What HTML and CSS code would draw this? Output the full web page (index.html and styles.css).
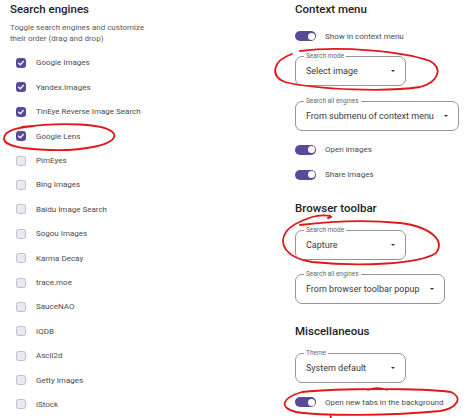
FILE: index.html
```html
<!DOCTYPE html>
<html lang="en">
<head>
<meta charset="utf-8">
<title>Options</title>
<link rel="stylesheet" href="styles.css">
</head>
<body>
<div class="page">
  <section class="col col-left">
    <h2 class="title">Search engines</h2>
    <p class="desc">Toggle search engines and customize<br>their order (drag and drop)</p>
    <ul class="engines">
      <li class="engine"><span class="cb on"><svg viewBox="0 0 10 10"><polyline points="2.6,5.2 4.3,6.8 7.4,3.4"/></svg></span>Google Images</li>
      <li class="engine"><span class="cb on"><svg viewBox="0 0 10 10"><polyline points="2.6,5.2 4.3,6.8 7.4,3.4"/></svg></span>Yandex.Images</li>
      <li class="engine"><span class="cb on"><svg viewBox="0 0 10 10"><polyline points="2.6,5.2 4.3,6.8 7.4,3.4"/></svg></span>TinEye Reverse Image Search</li>
      <li class="engine"><span class="cb on"><svg viewBox="0 0 10 10"><polyline points="2.6,5.2 4.3,6.8 7.4,3.4"/></svg></span>Google Lens</li>
      <li class="engine"><span class="cb"></span>PimEyes</li>
      <li class="engine"><span class="cb"></span>Bing Images</li>
      <li class="engine"><span class="cb"></span>Baidu Image Search</li>
      <li class="engine"><span class="cb"></span>Sogou Images</li>
      <li class="engine"><span class="cb"></span>Karma Decay</li>
      <li class="engine"><span class="cb"></span>trace.moe</li>
      <li class="engine"><span class="cb"></span>SauceNAO</li>
      <li class="engine"><span class="cb"></span>IQDB</li>
      <li class="engine"><span class="cb"></span>Ascii2d</li>
      <li class="engine"><span class="cb"></span>Getty Images</li>
      <li class="engine"><span class="cb"></span>iStock</li>
    </ul>
  </section>

  <section class="col col-right">
    <h2 class="title">Context menu</h2>
    <div class="switch-row first"><span class="switch"><span class="thumb"></span></span>Show in context menu</div>
    <div class="select s-first"><span class="label">Search mode</span><span class="value">Select image</span><span class="arrow"></span></div>
    <div class="select s-next"><span class="label">Search all engines</span><span class="value">From submenu of context menu</span><span class="arrow"></span></div>
    <div class="switch-row after-select"><span class="switch"><span class="thumb"></span></span>Open images</div>
    <div class="switch-row"><span class="switch"><span class="thumb"></span></span>Share images</div>

    <h2 class="title t-next">Browser toolbar</h2>
    <div class="select s-first"><span class="label">Search mode</span><span class="value">Capture</span><span class="arrow"></span></div>
    <div class="select s-next"><span class="label">Search all engines</span><span class="value">From browser toolbar popup</span><span class="arrow"></span></div>

    <h2 class="title t-misc">Miscellaneous</h2>
    <div class="select s-first"><span class="label">Theme</span><span class="value">System default</span><span class="arrow"></span></div>
    <div class="switch-row after-select"><span class="switch"><span class="thumb"></span></span>Open new tabs in the background</div>
  </section>
</div>

<svg class="marks" viewBox="0 0 474 418" width="474" height="418">
  <path d="M22 127 C60 122, 108 123, 114 134 C118 145, 82 151, 50 150 C22 149, 3 146, 4 138 C5 131, 14 128, 34 126"/>
  <path d="M300 51 C340 46, 402 51, 430 61 C443 68, 439 82, 420 87 C388 92, 318 90, 285 82 C270 76, 272 61, 292 54"/>
  <path d="M328 218 C338 216, 322 214, 312 217 C300 221, 290 226, 286 232 C278 244, 286 258, 312 262 C360 267, 420 264, 436 253 C445 241, 432 227, 400 223 C370 220, 332 221, 300 225"/>
  <path d="M302 392 C340 388, 422 388, 451 392 C463 397, 458 408, 440 411 C392 416, 322 416, 296 412 C279 408, 281 398, 302 392 M368 390 C375 387, 382 388, 387 390 M330 415 L331 418"/>
</svg>
</body>
</html>
```

FILE: styles.css
```css
html, body {
  margin: 0;
  padding: 0;
  background: #ffffff;
}

body {
  width: 474px;
  height: 418px;
  overflow: hidden;
  position: relative;
  font-family: Roboto, "Liberation Sans", Arial, sans-serif;
  color: #4a4a4a;
}

.page {
  display: flex;
}

.col-left {
  width: 295px;
  padding-left: 10px;
  box-sizing: border-box;
}

.col-right {
  flex: 1;
}

.title {
  margin: 0;
  font-size: 11.5px;
  line-height: 18px;
  font-weight: 500;
  color: #222226;
}

.desc {
  margin: 3.5px 0 0;
  font-size: 8px;
  line-height: 11px;
  color: #5a5a5a;
}

.engines {
  list-style: none;
  margin: 7.3px 0 0;
  padding: 0;
}

.engine {
  display: flex;
  align-items: center;
  height: 24.4px;
  font-size: 8px;
  color: #4c4c4c;
}

.cb {
  width: 10px;
  height: 10px;
  box-sizing: border-box;
  margin-left: 6px;
  margin-right: 10px;
  border-radius: 2.5px;
  border: 1px solid #c3bccf;
  background: #ece8f1;
  display: flex;
}

.cb.on {
  border-color: #5c4899;
  background: #5c4899;
}

.cb svg {
  width: 10px;
  height: 10px;
  margin: -1px;
}

.cb polyline {
  fill: none;
  stroke: #ffffff;
  stroke-width: 1.3;
  stroke-linecap: round;
  stroke-linejoin: round;
}

.switch-row {
  display: flex;
  align-items: center;
  height: 25px;
  font-size: 8px;
  color: #4c4c4c;
}

.switch-row.first {
  margin-top: 5.5px;
}

.switch-row.after-select {
  margin-top: 6.5px;
}

.switch {
  width: 21px;
  height: 10px;
  border-radius: 5px;
  background: #5c4899;
  margin-right: 9px;
  display: flex;
  align-items: center;
  justify-content: flex-end;
  padding-right: 1.5px;
  box-sizing: border-box;
}

.thumb {
  width: 7px;
  height: 7px;
  border-radius: 50%;
  background: #ffffff;
}

.select {
  position: relative;
  display: flex;
  align-items: center;
  justify-content: space-between;
  gap: 10px;
  height: 30px;
  box-sizing: border-box;
  border: 1px solid #949494;
  border-radius: 7px;
  padding: 0 10px;
  min-width: 111px;
  width: fit-content;
}

.select.s-first {
  margin-top: 7.5px;
}

.select.s-next {
  margin-top: 14.5px;
}

.label {
  position: absolute;
  top: -4px;
  left: 8px;
  padding: 0 2px;
  background: #ffffff;
  font-size: 6.5px;
  line-height: 7px;
  color: #666666;
  white-space: nowrap;
}

.value {
  font-size: 9px;
  color: #3a3a3a;
  white-space: nowrap;
}

.arrow {
  width: 0;
  height: 0;
  border-left: 2.5px solid transparent;
  border-right: 2.5px solid transparent;
  border-top: 2.5px solid #333333;
  flex: none;
}

.title.t-next {
  margin-top: 11.5px;
}

.title.t-next + .select.s-first {
  margin-top: 13px;
}

.title.t-misc {
  margin-top: 18px;
}

.title.t-misc + .select.s-first {
  margin-top: 13px;
}

.marks {
  position: absolute;
  left: 0;
  top: 0;
  pointer-events: none;
}

.marks path {
  fill: none;
  stroke: #e3161b;
  stroke-width: 1.8;
  stroke-linecap: round;
  stroke-linejoin: round;
}
```
